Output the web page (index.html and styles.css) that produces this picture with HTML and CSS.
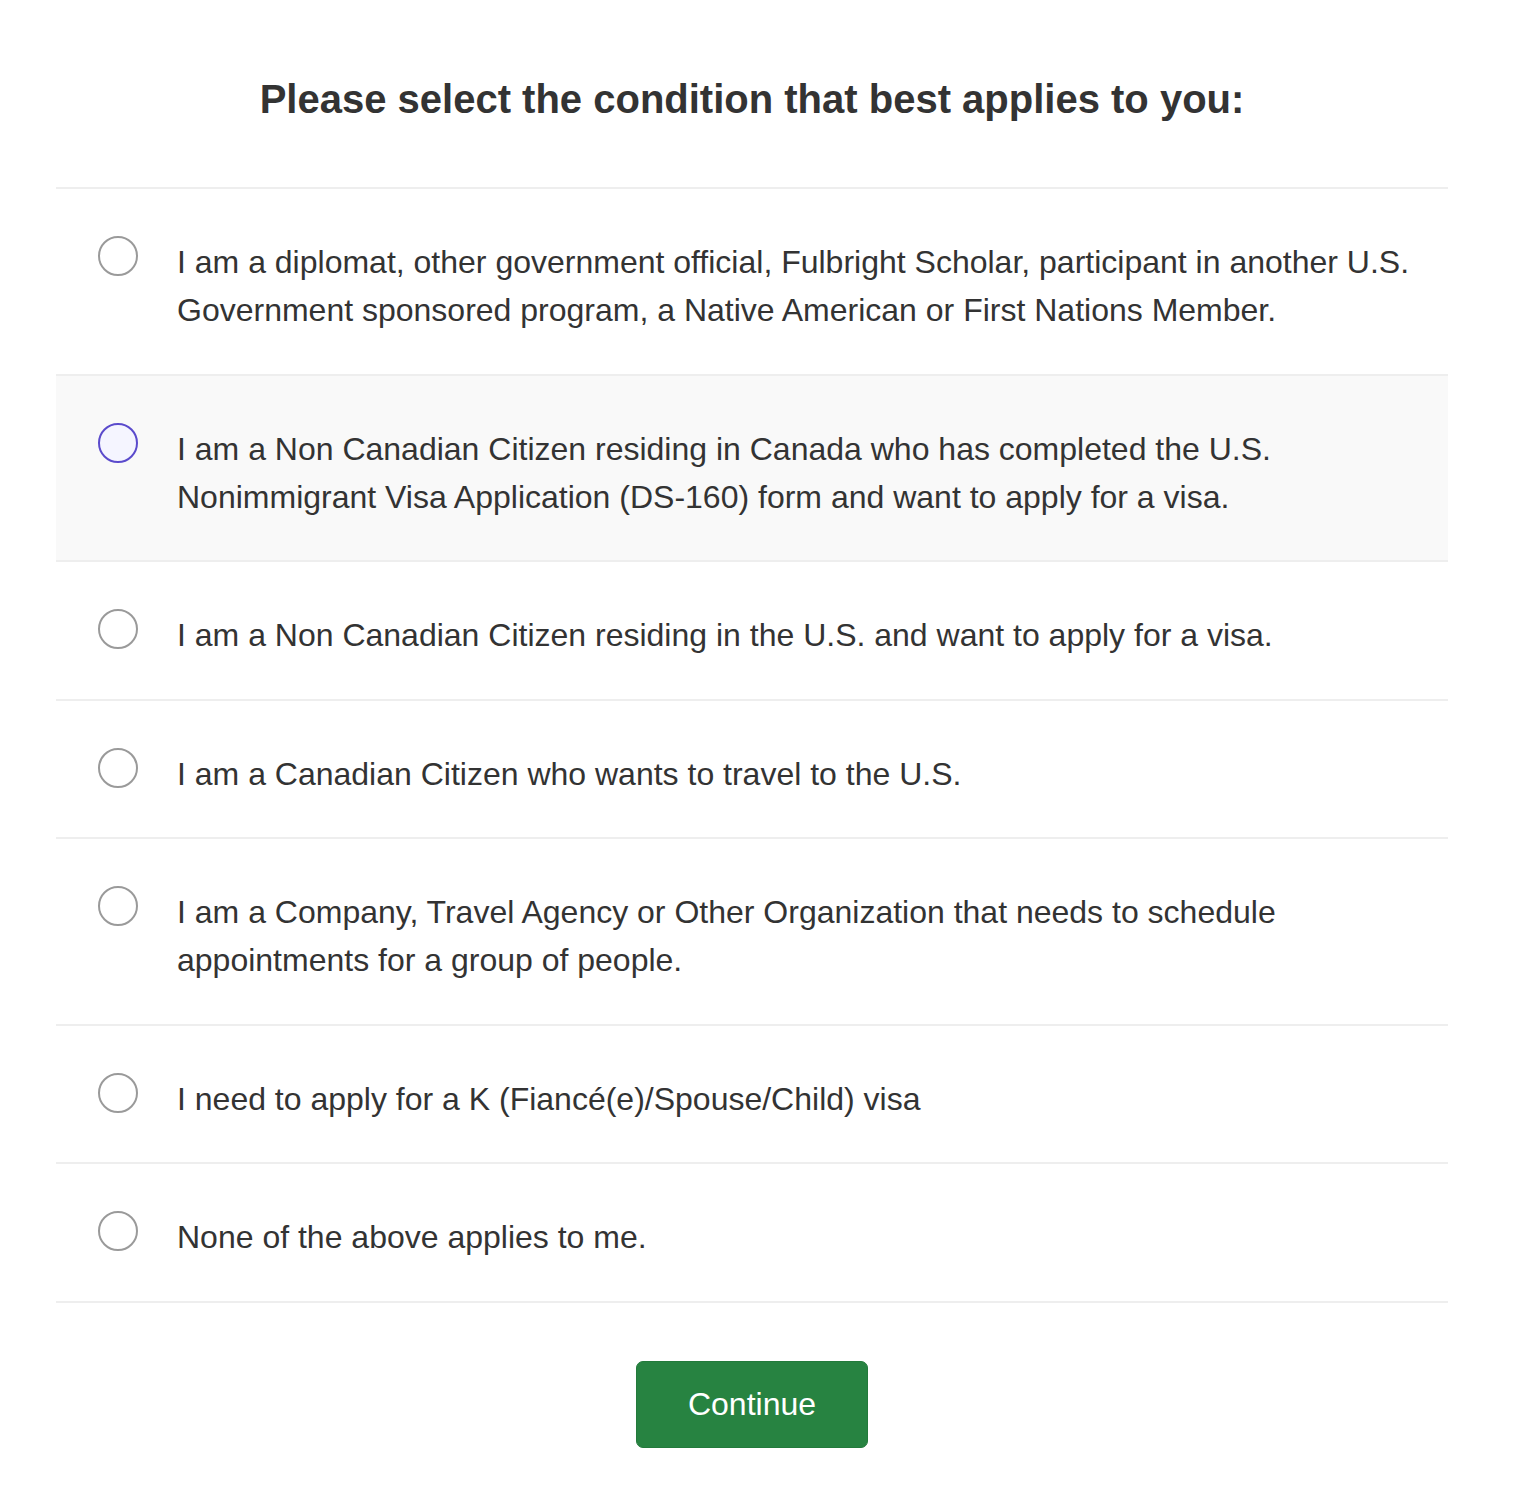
FILE: index.html
```html
<!DOCTYPE html>
<html lang="en">
<head>
    <meta charset="UTF-8">
    <meta name="viewport" content="width=device-width, initial-scale=1.0">
    <title>Select your condition</title>
    <link rel="stylesheet" href="styles.css">
</head>
<body>

<div class="container">
    <h1>Please select the condition that best applies to you:</h1>
    <form id="conditionForm">
        <div class="options">
            <label class="option">
                <input type="radio" name="condition" value="1">
                <span class="option-text">I am a diplomat, other government official, Fulbright Scholar, participant in another U.S. Government sponsored program, a Native American or First Nations Member.</span>
            </label>
            <label class="option hover">
                <input type="radio" name="condition" value="2">
                <span class="option-text">I am a Non Canadian Citizen residing in Canada who has completed the U.S. Nonimmigrant Visa Application (DS-160) form and want to apply for a visa.</span>
            </label>
            <label class="option">
                <input type="radio" name="condition" value="3">
                <span class="option-text">I am a Non Canadian Citizen residing in the U.S. and want to apply for a visa.</span>
            </label>
            <label class="option">
                <input type="radio" name="condition" value="4">
                <span class="option-text">I am a Canadian Citizen who wants to travel to the U.S.</span>
            </label>
            <label class="option">
                <input type="radio" name="condition" value="5">
                <span class="option-text">I am a Company, Travel Agency or Other Organization that needs to schedule appointments for a group of people.</span>
            </label>
            <label class="option">
                <input type="radio" name="condition" value="6">
                <span class="option-text">I need to apply for a K (Fiancé(e)/Spouse/Child) visa</span>
            </label>
            <label class="option">
                <input type="radio" name="condition" value="7">
                <span class="option-text">None of the above applies to me.</span>
            </label>
        </div>
        <div class="actions">
            <button type="button" class="continue">Continue</button>
        </div>
    </form>
</div>

</body>
</html>
```

FILE: styles.css
```css
body {
    font-family: 'Liberation Sans', Arial, sans-serif;
    margin: 0;
    background-color: #fff;
    color: #333;
}
.container {
    padding: 0 88px 0 56px;
}
h1 {
    text-align: center;
    font-size: 40px;
    line-height: 48px;
    font-weight: bold;
    margin: 75px 0 64px;
    color: #333;
}
.options {
    border-top: 2px solid #eee;
}
.option {
    display: flex;
    align-items: flex-start;
    gap: 39px;
    padding: 47px 30px 39.5px 42px;
    border-bottom: 2px solid #eee;
    cursor: pointer;
}
.option.hover,
.option:hover {
    background-color: #f9f9f9;
}
.option input[type="radio"] {
    appearance: none;
    flex: 0 0 40px;
    width: 40px;
    height: 40px;
    margin: 0;
    border: 2px solid #9a9a9a;
    border-radius: 50%;
    background: #fff;
    cursor: pointer;
}
.option.hover input[type="radio"],
.option:hover input[type="radio"] {
    border-color: #5b4bcc;
    background: #f5f5ff;
}
.option input[type="radio"]:checked {
    border: 12px solid #5b4bcc;
}
.option-text {
    padding-top: 2px;
    font-size: 32px;
    line-height: 48px;
    color: #333;
}
.actions {
    display: flex;
    justify-content: center;
    padding: 58px 0 42px;
}
.continue {
    width: 232px;
    height: 87px;
    font-family: inherit;
    font-size: 32px;
    color: #fff;
    background-color: #278341;
    border: 1px solid #237a3b;
    border-radius: 7px;
    cursor: pointer;
}
```
